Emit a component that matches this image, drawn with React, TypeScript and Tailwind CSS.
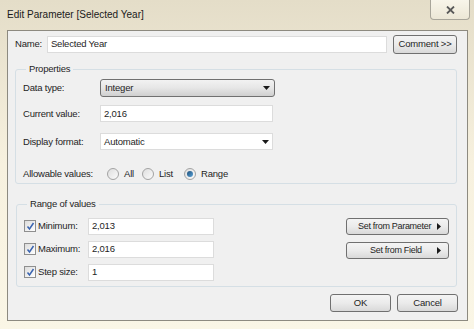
import React from 'react';

const font = { fontFamily: '"Liberation Sans", Arial, sans-serif' };

const Arrow: React.FC = () => (
  <svg width="7" height="4" viewBox="0 0 7 4" className="shrink-0">
    <path d="M0 0h7L3.5 4z" fill="#1a1a1a" />
  </svg>
);

const Right: React.FC = () => (
  <svg width="4" height="7" viewBox="0 0 4 7" className="shrink-0">
    <path d="M0 0v7l4-3.5z" fill="#1a1a1a" />
  </svg>
);

const Radio: React.FC<{ checked?: boolean }> = ({ checked }) => (
  <span className="w-[12px] h-[12px] rounded-full border border-[#a3a3a3] bg-gradient-to-br from-[#dedede] to-[#fbfbfb] flex items-center justify-center">
    {checked && <span className="w-[6px] h-[6px] rounded-full bg-gradient-to-br from-[#1f4f7a] to-[#5aa3d8]" />}
  </span>
);

const Check: React.FC = () => (
  <span className="w-[12px] h-[12px] border border-[#8f8f8f] bg-gradient-to-br from-[#dcdcdc] to-[#ffffff] flex items-center justify-center">
    <svg width="9" height="9" viewBox="0 0 9 9">
      <path d="M1.5 4.5l2 2.5 4-6" stroke="#3a64b0" strokeWidth="1.5" fill="none" />
    </svg>
  </span>
);

const Btn: React.FC<{ children: React.ReactNode; className?: string }> = ({ children, className }) => (
  <div
    className={
      'flex items-center justify-center whitespace-nowrap rounded-[3px] border border-[#707070] bg-gradient-to-b from-[#f4f4f4] via-[#ebebeb] to-[#d9d9d9] text-[#1e1e1e] ' +
      (className ?? '')
    }
  >
    {children}
  </div>
);

const Field: React.FC<{ value: string; className?: string }> = ({ value, className }) => (
  <div className={'h-[17px] bg-white border border-[#dcdcdc] flex items-center px-[3px] whitespace-nowrap ' + (className ?? '')}>
    {value}
  </div>
);

export default function App() {
  return (
    <div
      style={font}
      className="w-[474px] h-[329px] overflow-hidden text-[#1e1e1e] bg-gradient-to-b from-[#e4ddc8] via-[#f7f1df] to-[#faf6e6] flex flex-col"
    >
      <div className="h-[30px] flex items-start justify-between">
        <div className="pl-[7px] pt-[7px] text-[10px] text-[#1a1a1a] whitespace-nowrap">Edit Parameter [Selected Year]</div>
        <div className="mr-[4px] w-[40px] h-[20px] border border-t-0 border-[#a8a59a] rounded-b-[4px] bg-gradient-to-b from-[#f8f5ea] to-[#ece7d6] flex items-center justify-center">
          <svg width="9" height="8" viewBox="0 0 9 8">
            <path d="M1 0.5l7 7M8 0.5l-7 7" stroke="#5a5a5a" strokeWidth="1.8" fill="none" />
          </svg>
        </div>
      </div>

      <div className="ml-[7px] mr-[6px] h-[291px] border border-[#8d8a80] bg-[#f0f0f0] text-[9.5px] tracking-[-0.2px] whitespace-nowrap flex flex-col">
        {/* Name row */}
        <div className="flex items-center h-[19px] mt-[4px] pl-[7px] pr-[10px]">
          <span className="w-[32px]">Name:</span>
          <Field value="Selected Year" className="w-[341px]" />
          <Btn className="ml-[6px] w-[64px] h-[19px]">Comment &gt;&gt;</Btn>
        </div>

        {/* Properties */}
        <fieldset className="mt-[8px] ml-[7px] mr-[10px] h-[122px] border border-[#d5dfe5] rounded-[3px] px-[7px]">
          <legend className="ml-[3px] px-[3px]">Properties</legend>
          <div className="flex items-center h-[17px] mt-[3px]">
            <span className="w-[77px]">Data type:</span>
            <div className="w-[175px] h-[18px] rounded-[3px] border border-[#707070] bg-gradient-to-b from-[#f2f2f2] via-[#e6e6e6] to-[#cfcfcf] flex items-center justify-between px-[4px]">
              <span>Integer</span>
              <Arrow />
            </div>
          </div>
          <div className="flex items-center h-[17px] mt-[9px]">
            <span className="w-[77px]">Current value:</span>
            <Field value="2,016" className="w-[173px]" />
          </div>
          <div className="flex items-center h-[17px] mt-[11px]">
            <span className="w-[77px]">Display format:</span>
            <div className="w-[173px] h-[17px] bg-white border border-[#dcdcdc] flex items-center justify-between px-[3px]">
              <span>Automatic</span>
              <Arrow />
            </div>
          </div>
          <div className="flex items-center h-[14px] mt-[17px]">
            <span className="w-[84px]">Allowable values:</span>
            <Radio />
            <span className="ml-[5px] w-[18px]">All</span>
            <Radio />
            <span className="ml-[5px] w-[25px]">List</span>
            <Radio checked />
            <span className="ml-[5px]">Range</span>
          </div>
        </fieldset>

        {/* Range of values */}
        <fieldset className="mt-[13px] ml-[8px] mr-[10px] h-[90px] border border-[#d5dfe5] rounded-[3px] pl-[7px] pr-[7px]">
          <legend className="ml-[3px] px-[3px]">Range of values</legend>
          <div className="flex justify-between mt-[7px]">
            <div className="flex flex-col gap-[7px]">
              {[
                ['Minimum:', '2,013'],
                ['Maximum:', '2,016'],
                ['Step size:', '1'],
              ].map(([l, v]) => (
                <div key={l} className="flex items-center h-[16px]">
                  <Check />
                  <span className="ml-[2px] w-[50px]">{l}</span>
                  <Field value={v} className="w-[126px] h-[16px]" />
                </div>
              ))}
            </div>
            <div className="flex flex-col gap-[7px]">
              <Btn className="w-[103px] h-[17px] justify-start pr-[7px] text-[9px] tracking-[-0.3px]">
                <span className="pl-[11px]">Set from Parameter</span>
                <span className="ml-auto"><Right /></span>
              </Btn>
              <Btn className="w-[103px] h-[17px] justify-start pr-[7px] text-[9px] tracking-[-0.3px]">
                <span className="pl-[23px]">Set from Field</span>
                <span className="ml-auto"><Right /></span>
              </Btn>
            </div>
          </div>
        </fieldset>

        {/* Bottom buttons */}
        <div className="flex justify-end gap-[6px] mt-[7px] mr-[9px]">
          <Btn className="w-[61px] h-[18px]">OK</Btn>
          <Btn className="w-[61px] h-[18px]">Cancel</Btn>
        </div>
      </div>
    </div>
  );
}
